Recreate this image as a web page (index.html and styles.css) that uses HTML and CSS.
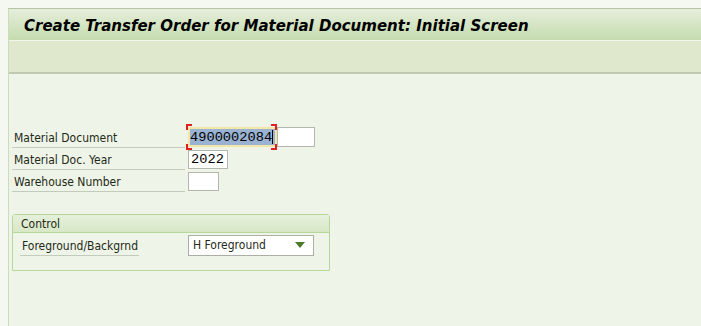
FILE: index.html
```html
<!DOCTYPE html>
<html lang="en">
<head>
    <meta charset="UTF-8">
    <title>Create Transfer Order for Material Document</title>
    <link rel="stylesheet" href="styles.css">
</head>
<body>
    <div class="window">
        <div class="title-bar">
            <h1>Create Transfer Order for Material Document: Initial Screen</h1>
        </div>
        <div class="toolbar"></div>

        <div class="content">
            <div class="field-row">
                <label class="field-label">Material Document</label>
                <div class="focus-frame">
                    <span class="corner tl"></span>
                    <span class="corner tr"></span>
                    <span class="corner bl"></span>
                    <span class="corner br"></span>
                    <div class="field field-doc"><span class="selected">4900002084</span><span class="caret"></span></div>
                </div>
                <div class="field field-item"></div>
            </div>
            <div class="field-row">
                <label class="field-label">Material Doc. Year</label>
                <div class="field field-year">2022</div>
            </div>
            <div class="field-row">
                <label class="field-label">Warehouse Number</label>
                <div class="field field-whse"></div>
            </div>

            <!-- Gruppenrahmen -->
            <div class="group">
                <div class="group-head">Control</div>
                <div class="group-body">
                    <div class="field-row">
                        <label class="field-label short">Foreground/Backgrnd</label>
                        <div class="dropdown">
                            <span>H Foreground</span>
                            <svg width="10" height="6" viewBox="0 0 10 6"><path d="M0 0h10L5 6z" fill="#4d7a2c"/></svg>
                        </div>
                    </div>
                </div>
            </div>
        </div>
    </div>
</body>
</html>
```

FILE: styles.css
```css
body {
    margin: 0;
    background-color: #f5f8f1;
    font-family: 'DejaVu Sans Condensed', 'Liberation Sans', sans-serif;
    font-size: 12px;
    color: #1f2a17;
}

.window {
    margin: 8px 0 0 8px;
    border-left: 1px solid #cadcba;
    border-top: 1px solid #b4c4a4;
    height: 317px;
    display: flex;
    flex-direction: column;
}

.title-bar {
    height: 31px;
    background: linear-gradient(#e6eedb, #c4dcae);
    display: flex;
    align-items: center;
    padding-left: 15px;
}

h1 {
    margin: 0;
    font-size: 16.7px;
    font-weight: bold;
    font-style: italic;
    color: #000;
}

.toolbar {
    height: 31px;
    background-color: #dfe7cd;
    border-top: 1px solid #f2f6ec;
    border-bottom: 2px solid #c0cab2;
}

.content {
    flex: 1;
    background-color: #eef4e8;
    padding: 52px 0 0 3px;
}

.field-row {
    display: flex;
    align-items: center;
    height: 22px;
}

.field-label {
    width: 171px;
    height: 18px;
    padding-top: 3px;
    line-height: 18px;
    padding-left: 2px;
    border-bottom: 1px solid #c3cbbd;
    color: #1f2a17;
    margin-right: 3px;
}

.field {
    height: 19px;
    background-color: #fff;
    border: 1px solid #b3b8ae;
    box-sizing: border-box;
    font-family: 'Liberation Mono', monospace;
    font-size: 13.7px;
    line-height: 17px;
    padding-left: 2px;
    color: #000;
}

.focus-frame {
    position: relative;
    margin-left: -2px;
    padding: 1px 0 1px 2px;
}

.corner {
    position: absolute;
    width: 4px;
    height: 4px;
    border: 0 solid #e02020;
}

.corner.tl { top: -2px; left: 0; border-width: 2px 0 0 2px; }
.corner.tr { top: -2px; right: 0; border-width: 2px 2px 0 0; }
.corner.bl { bottom: -2px; left: 0; border-width: 0 0 2px 2px; }
.corner.br { bottom: -2px; right: 0; border-width: 0 2px 2px 0; }

.field-doc {
    width: 89px;
    height: 20px;
    border: 2px solid #f3e6a6;
    padding-left: 0;
    background-color: #9ab3d2;
    display: flex;
    align-items: center;
}

.caret {
    width: 1px;
    height: 14px;
    background-color: #000;
}

.field-item {
    width: 38px;
    height: 20px;
}

.field-year {
    width: 40px;
}

.field-whse {
    width: 31px;
}

.group {
    margin: 22px 0 0 0;
    width: 318px;
    border: 1px solid #b6d69a;
    border-radius: 3px 3px 0 0;
    box-sizing: border-box;
}

.group-head {
    height: 17px;
    line-height: 19px;
    padding-left: 8px;
    background: linear-gradient(#e6f0dc, #d7e8c6);
    border-bottom: 1px solid #b6d69a;
}

.group-body {
    padding: 1px 0 14px 7px;
}

.field-label.short {
    width: 117px;
    margin-right: 49px;
}

.dropdown {
    width: 126px;
    height: 21px;
    box-sizing: border-box;
    background-color: #fff;
    border: 1px solid #aab0a4;
    display: flex;
    align-items: center;
    justify-content: space-between;
    padding: 0 8px 0 4px;
}
```
